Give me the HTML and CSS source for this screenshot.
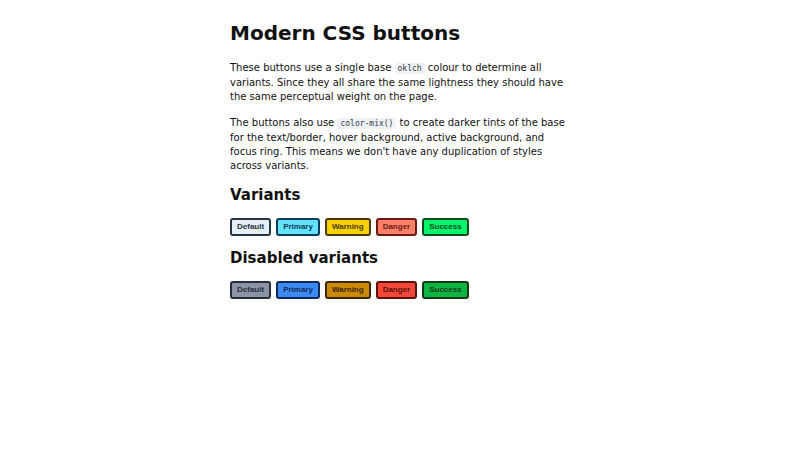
FILE: index.html
```html
<!DOCTYPE html>
<html lang="en">
<head>
<meta charset="utf-8">
<title>Modern CSS buttons</title>
<link rel="stylesheet" href="styles.css">
</head>
<body>
<main class="page">
  <h1 class="title">Modern CSS buttons</h1>
  <p class="text">These buttons use a single base <code class="code">oklch</code> colour to determine all variants. Since they all share the same lightness they should have the same perceptual weight on the page.</p>
  <p class="text">The buttons also use <code class="code">color-mix()</code> to create darker tints of the base for the text/border, hover background, active background, and focus ring. This means we don't have any duplication of styles across variants.</p>

  <h2 class="subtitle">Variants</h2>
  <div class="btn-row">
    <button class="btn btn-default">Default</button>
    <button class="btn btn-primary">Primary</button>
    <button class="btn btn-warning">Warning</button>
    <button class="btn btn-danger">Danger</button>
    <button class="btn btn-success">Success</button>
  </div>

  <h2 class="subtitle">Disabled variants</h2>
  <div class="btn-row">
    <button class="btn btn-default" disabled>Default</button>
    <button class="btn btn-primary" disabled>Primary</button>
    <button class="btn btn-warning" disabled>Warning</button>
    <button class="btn btn-danger" disabled>Danger</button>
    <button class="btn btn-success" disabled>Success</button>
  </div>
</main>
</body>
</html>
```
FILE: styles.css
```css
html, body {
  margin: 0;
  padding: 0;
  background: #ffffff;
}

body {
  font-family: "DejaVu Sans", sans-serif;
  font-size: 10px;
  line-height: 14px;
  color: #111111;
}

.page {
  width: 340px;
  margin: 0 auto;
  padding-top: 21px;
}

.title {
  font-size: 20px;
  line-height: 24px;
  font-weight: 700;
  margin: 0 0 16px;
}

.text {
  margin: 0 0 12px;
}

.code {
  font-family: "DejaVu Sans Mono", monospace;
  font-size: 8px;
  background: #eef2f6;
  border-radius: 3px;
  padding: 1px 3px;
  color: #333a44;
}

.subtitle {
  font-size: 15px;
  line-height: 20px;
  font-weight: 700;
  margin: 0 0 13px;
}

.btn-row {
  display: flex;
  gap: 5px;
  margin-bottom: 12px;
}

/* Each variant only sets --base and --ink; everything else is shared */
.btn {
  font-family: "Liberation Sans", Arial, sans-serif;
  font-size: 8px;
  font-weight: 700;
  line-height: 10px;
  padding: 2px 5px;
  border: 2px solid var(--ink);
  border-radius: 3px;
  background: var(--base);
  color: var(--ink);
  cursor: pointer;
}

.btn-default { --base: #e6eef8; --ink: #263444; }
.btn-primary { --base: #62e2fc; --ink: #0f3a5a; }
.btn-warning { --base: #f7d200; --ink: #4a3800; }
.btn-danger  { --base: #fd8068; --ink: #6a1c12; }
.btn-success { --base: #00f46c; --ink: #064a1e; }

.btn:disabled { cursor: not-allowed; }
.btn-default:disabled { --base: #8b94a6; --ink: #262e3c; }
.btn-primary:disabled { --base: #3b8af4; --ink: #102a58; }
.btn-warning:disabled { --base: #c98a00; --ink: #3e2600; }
.btn-danger:disabled  { --base: #f2473a; --ink: #5e120c; }
.btn-success:disabled { --base: #0db444; --ink: #063a16; }
```
